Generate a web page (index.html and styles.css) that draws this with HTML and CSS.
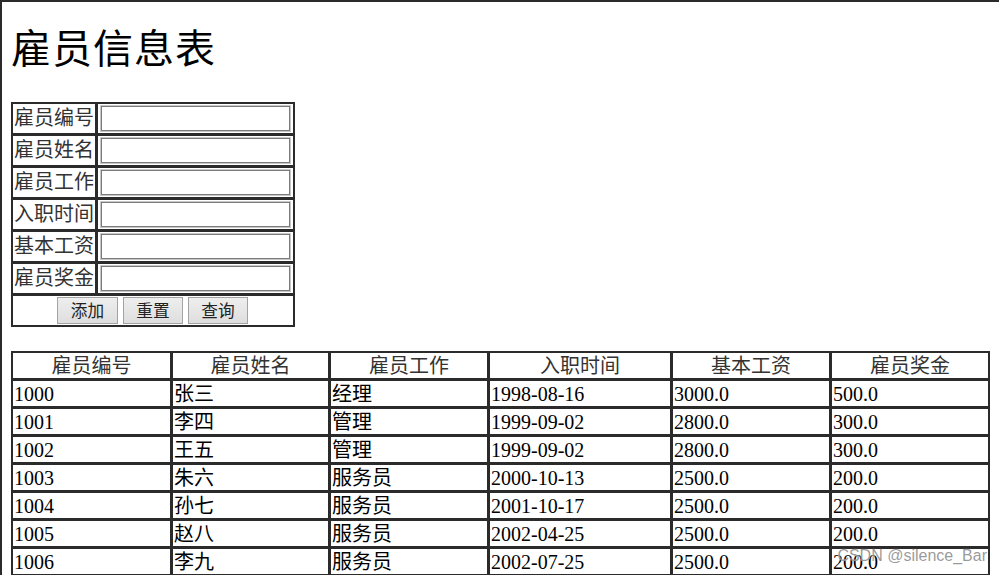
FILE: index.html
```html
<!DOCTYPE html>
<html lang="zh-CN">
<head>
<meta charset="utf-8">
<title>雇员信息表</title>
<link rel="stylesheet" href="styles.css">
</head>
<body>
<div class="page">
  <h1 class="title">雇员信息表</h1>
  <table class="form-table">
    <tr><td class="label">雇员编号</td><td class="field"><input class="text-input" type="text"></td></tr>
    <tr><td class="label">雇员姓名</td><td class="field"><input class="text-input" type="text"></td></tr>
    <tr><td class="label">雇员工作</td><td class="field"><input class="text-input" type="text"></td></tr>
    <tr><td class="label">入职时间</td><td class="field"><input class="text-input" type="text"></td></tr>
    <tr><td class="label">基本工资</td><td class="field"><input class="text-input" type="text"></td></tr>
    <tr><td class="label">雇员奖金</td><td class="field"><input class="text-input" type="text"></td></tr>
    <tr>
      <td class="actions" colspan="2">
        <div class="button-row">
          <button class="btn" type="button">添加</button>
          <button class="btn" type="button">重置</button>
          <button class="btn" type="button">查询</button>
        </div>
      </td>
    </tr>
  </table>

  <table class="data-table">
    <thead>
      <tr>
        <th class="c1">雇员编号</th>
        <th class="c2">雇员姓名</th>
        <th class="c3">雇员工作</th>
        <th class="c4">入职时间</th>
        <th class="c5">基本工资</th>
        <th class="c6">雇员奖金</th>
      </tr>
    </thead>
    <tbody>
      <tr><td>1000</td><td>张三</td><td>经理</td><td>1998-08-16</td><td>3000.0</td><td>500.0</td></tr>
      <tr><td>1001</td><td>李四</td><td>管理</td><td>1999-09-02</td><td>2800.0</td><td>300.0</td></tr>
      <tr><td>1002</td><td>王五</td><td>管理</td><td>1999-09-02</td><td>2800.0</td><td>300.0</td></tr>
      <tr><td>1003</td><td>朱六</td><td>服务员</td><td>2000-10-13</td><td>2500.0</td><td>200.0</td></tr>
      <tr><td>1004</td><td>孙七</td><td>服务员</td><td>2001-10-17</td><td>2500.0</td><td>200.0</td></tr>
      <tr><td>1005</td><td>赵八</td><td>服务员</td><td>2002-04-25</td><td>2500.0</td><td>200.0</td></tr>
      <tr><td>1006</td><td>李九</td><td>服务员</td><td>2002-07-25</td><td>2500.0</td><td>200.0</td></tr>
    </tbody>
  </table>

  <div class="watermark">CSDN @silence_Bar</div>
</div>
</body>
</html>
```

FILE: styles.css
```css
html, body {
  margin: 0;
  padding: 0;
  background: #ffffff;
}

body {
  font-family: "Liberation Serif", "Noto Sans CJK SC", serif;
  font-size: 20px;
  color: #111111;
}

.page {
  position: relative;
  border-top: 2px solid #2b2b2b;
  border-left: 2px solid #2b2b2b;
  padding: 25px 9px 0 9px;
  min-height: 600px;
}

.title {
  margin: 0 0 29px 0;
  font-size: 40px;
  line-height: 46px;
  font-weight: normal;
  letter-spacing: 1px;
  color: #000000;
}

/* ---------- form table ---------- */
.form-table {
  border-collapse: separate;
  border-spacing: 1px;
  background: #2b2b2b;
}

.form-table td {
  background: #ffffff;
  border: 1px solid #2b2b2b;
  padding: 1px;
  line-height: 27px;
}

.label {
  white-space: nowrap;
  color: #333333;
}

.field {
  padding: 1px;
}

.text-input {
  display: block;
  box-sizing: border-box;
  width: 189px;
  height: 25px;
  margin: 1px 2px;
  padding: 1px 3px;
  border: 1px solid #7a7a7a;
  box-shadow: 0 0 0 1px #c8c8c8;
  background: #ffffff;
  font-size: 16px;
  outline: none;
}

.button-row {
  display: flex;
  justify-content: center;
  gap: 5px;
  padding-right: 1px;
}

.btn {
  box-sizing: border-box;
  width: 61px;
  height: 27px;
  margin: 0;
  padding: 0;
  border: 1px solid #a3a3a3;
  background: linear-gradient(#eeeeee, #dedede);
  color: #222222;
  font-family: "Noto Sans CJK SC", "Noto Sans", sans-serif;
  font-size: 16.67px;
  line-height: 25px;
}

.btn + .btn {
  width: 60px;
}

/* ---------- data table ---------- */
.data-table {
  width: 100%;
  margin-top: 24px;
  table-layout: fixed;
  border-collapse: separate;
  border-spacing: 1px;
  background: #2b2b2b;
}

.data-table th,
.data-table td {
  background: #ffffff;
  border: 1px solid #2b2b2b;
  padding: 2px 1px 0 1px;
  line-height: 23px;
  white-space: nowrap;
  overflow: hidden;
}

.data-table th {
  font-weight: normal;
  text-align: center;
  color: #333333;
}

.data-table td {
  text-align: left;
  color: #000000;
}

.data-table .c1 { width: 155px; }
.data-table .c2 { width: 153px; }
.data-table .c3 { width: 154px; }
.data-table .c4 { width: 178px; }
.data-table .c5 { width: 154px; }
.data-table .c6 { width: 154px; }

/* ---------- watermark overlay ---------- */
.watermark {
  position: absolute;
  top: 545px;
  right: 12px;
  font-family: "Liberation Sans", Arial, sans-serif;
  font-size: 16px;
  color: rgba(120, 120, 120, 0.75);
  text-shadow: 0 0 1px rgba(255, 255, 255, 0.8);
  pointer-events: none;
}
```
